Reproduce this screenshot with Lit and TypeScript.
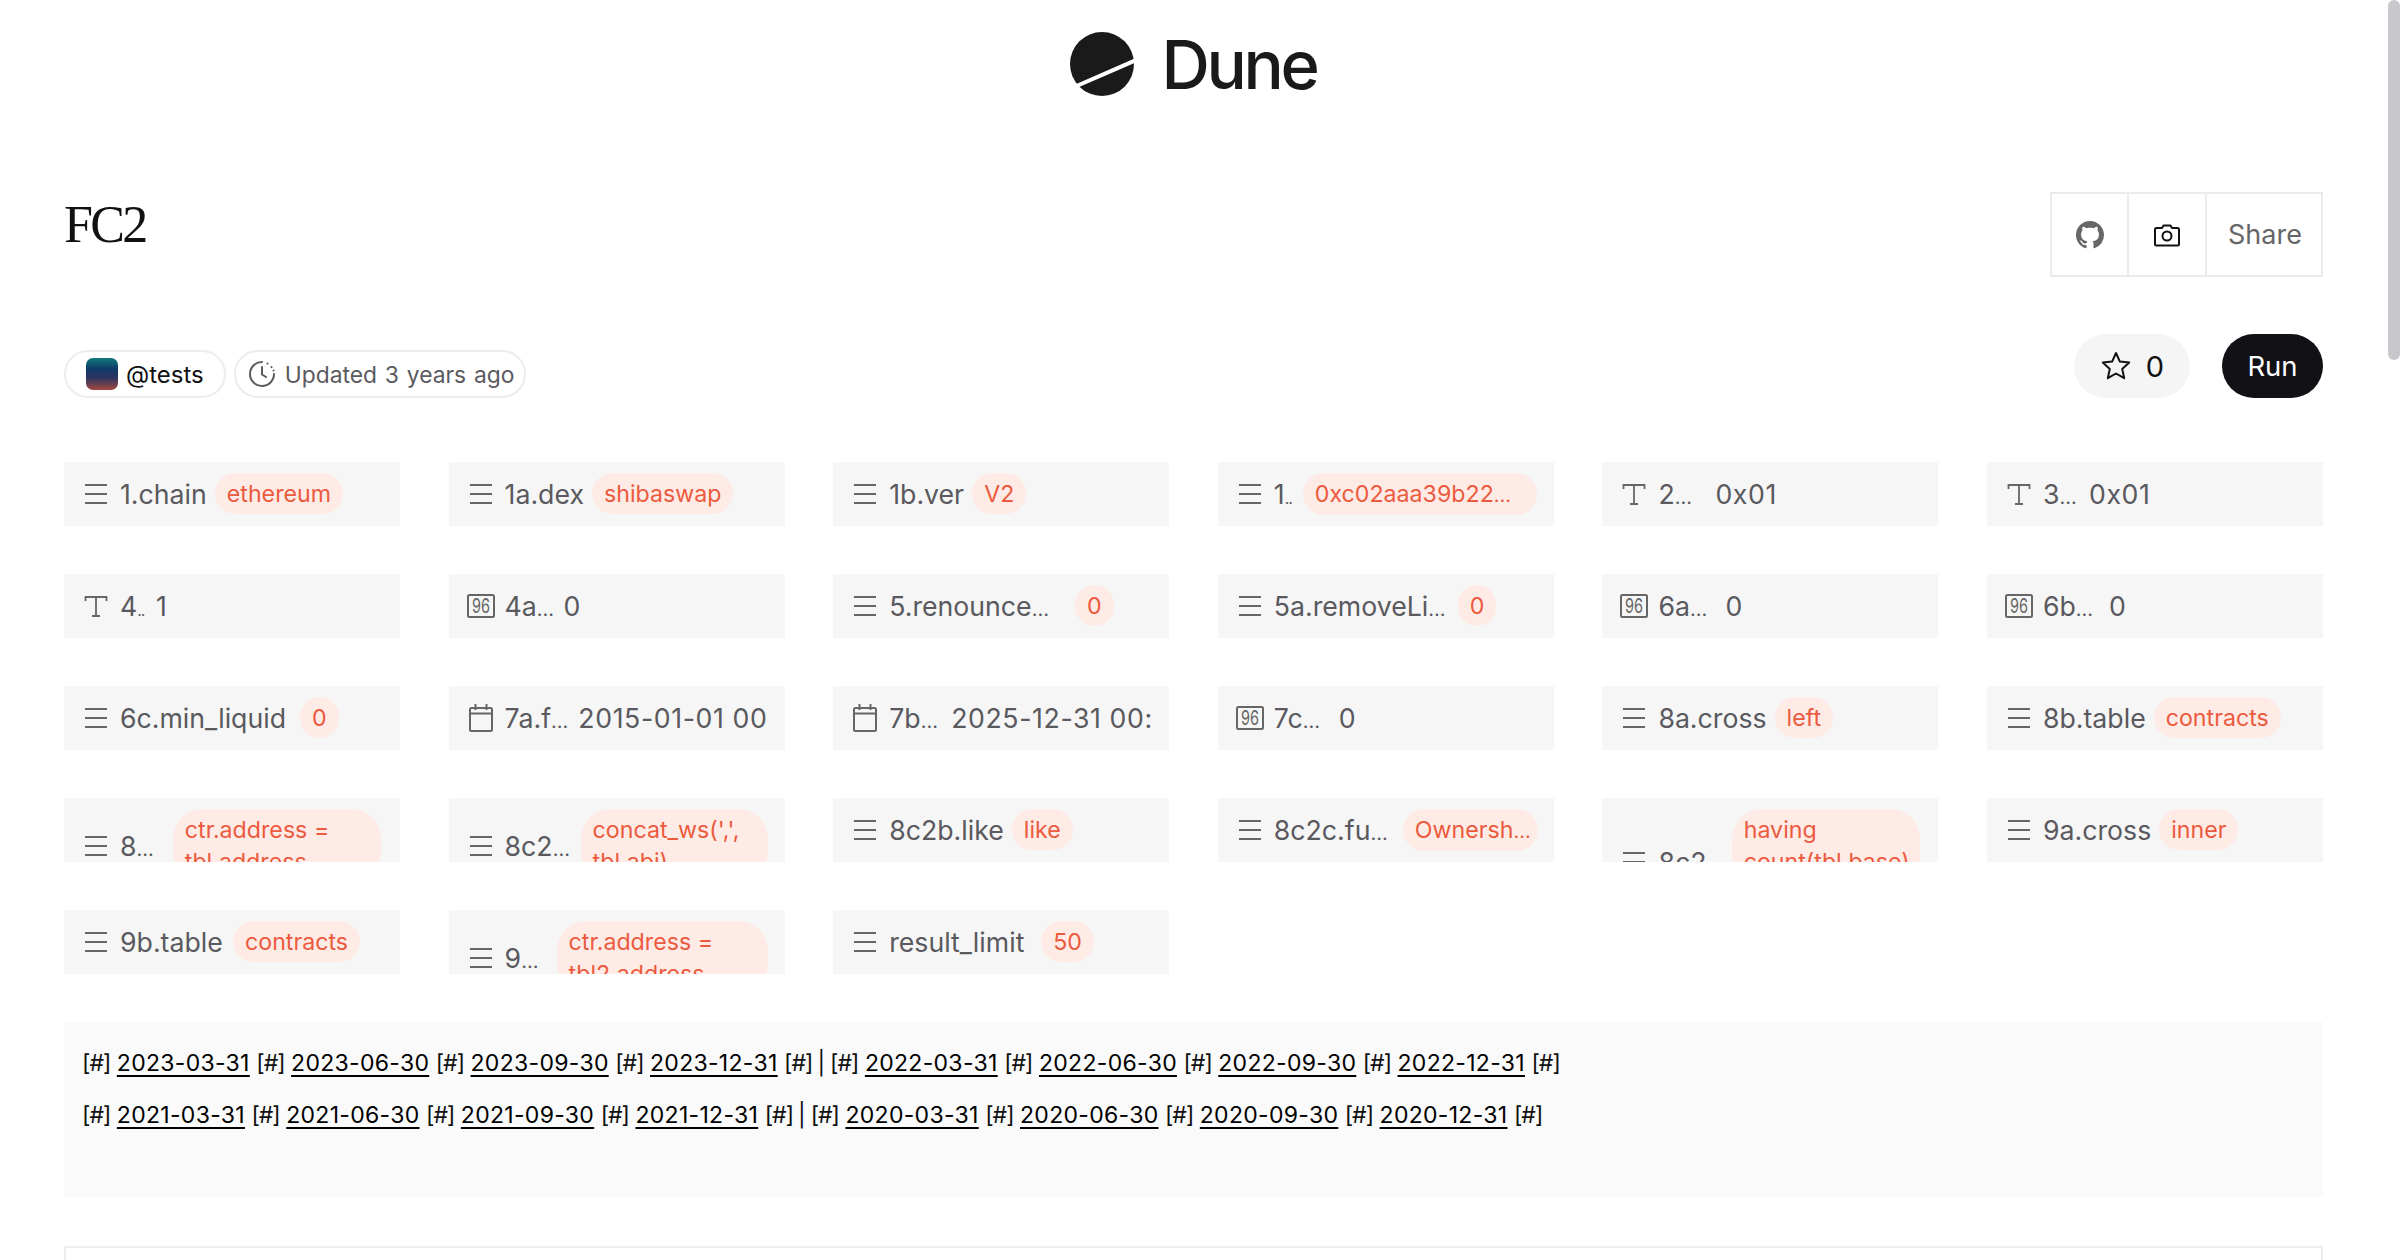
import { LitElement, html, css } from "lit";
import { customElement } from "lit/decorators.js";

type P = { i: string; l: string; w?: number; v: string; t?: boolean; g?: number; tw?: number };

const params: P[] = [
  { i: "m", l: "1.chain", v: "ethereum", t: true },
  { i: "m", l: "1a.dex", v: "shibaswap", t: true },
  { i: "m", l: "1b.ver", v: "V2", t: true },
  { i: "m", l: "1..", w: 22, v: "0xc02aaa39b22…", t: true, g: 7, tw: 234 },
  { i: "s", l: "2…", w: 37, v: "0x01", g: 20 },
  { i: "s", l: "3…", w: 35, v: "0x01", g: 11 },
  { i: "s", l: "4..", w: 30, v: "1", g: 6 },
  { i: "n", l: "4a…", w: 50, v: "0", g: 9 },
  { i: "m", l: "5.renounce…", w: 158, v: "0", t: true, g: 26 },
  { i: "m", l: "5a.removeLi…", w: 172, v: "0", t: true, g: 12 },
  { i: "n", l: "6a…", w: 55, v: "0", g: 12 },
  { i: "n", l: "6b…", w: 55, v: "0", g: 11 },
  { i: "m", l: "6c.min_liquid", w: 172, v: "0", t: true },
  { i: "c", l: "7a.f…", w: 60, v: "2015-01-01 00", g: 10 },
  { i: "c", l: "7b…", w: 50, v: "2025-12-31 00:", g: 12 },
  { i: "n", l: "7c…", w: 51, v: "0", g: 14 },
  { i: "m", l: "8a.cross", v: "left", t: true },
  { i: "m", l: "8b.table", v: "contracts", t: true },
  { i: "m", l: "8…", w: 33, v: "ctr.address = tbl.address", t: true, g: 19, tw: 208 },
  { i: "m", l: "8c2…", w: 68, v: "concat_ws(',', tbl.abi)", t: true, g: 8, tw: 187 },
  { i: "m", l: "8c2b.like", v: "like", t: true },
  { i: "m", l: "8c2c.fu…", w: 114, v: "Ownersh…", t: true, g: 15, tw: 135 },
  { i: "m", l: "8c2…", w: 50, v: "having count(tbl.base) > 0", t: true, g: 8, tw: 188 },
  { i: "m", l: "9a.cross", v: "inner", t: true },
  { i: "m", l: "9b.table", w: 105, v: "contracts", t: true },
  { i: "m", l: "9…", w: 35, v: "ctr.address = tbl2.address", t: true, g: 17, tw: 211 },
  { i: "m", l: "result_limit", w: 144, v: "50", t: true },
];

const line1 = ["2023-03-31", "2023-06-30", "2023-09-30", "2023-12-31", "|", "2022-03-31", "2022-06-30", "2022-09-30", "2022-12-31"];
const line2 = ["2021-03-31", "2021-06-30", "2021-09-30", "2021-12-31", "|", "2020-03-31", "2020-06-30", "2020-09-30", "2020-12-31"];

const icons: Record<string, unknown> = {
  m: html`<svg class="ic" viewBox="0 0 24 24" fill="none" stroke="currentColor" stroke-width="2"><path d="M1 3h22M1 12h22M1 21h22" /></svg>`,
  s: html`<svg class="ic" viewBox="0 0 24 24" fill="none" stroke="currentColor" stroke-width="1.800"><path d="M1.500 7V3h21v4M12 3v19M8 22h8" /></svg>`,
  n: html`<svg class="ic icn" viewBox="0 0 28 24"><rect x="1" y="1" width="26" height="22" rx="1.500" fill="none" stroke="currentColor" stroke-width="2" /><text class="nt" x="14" y="19" text-anchor="middle" textLength="18" lengthAdjust="spacingAndGlyphs">96</text></svg>`,
  c: html`<svg class="ic icc" viewBox="0 0 24 28" fill="none" stroke="currentColor" stroke-width="2"><rect x="1" y="4" width="22" height="23" rx="1.500" /><path d="M1 9.500h22M6.500 0v6M17.500 0v6" /></svg>`,
};

@customElement("app-root")
export class AppRoot extends LitElement {
  static styles = css`
    :host {
      display: block;
      position: relative;
      height: 100vh;
      overflow: hidden;
      background: #fff;
      font-family: Inter, "Liberation Sans", sans-serif;
      color: #111;
    }
    * { box-sizing: border-box; }
    .thumb { position: absolute; top: 0; right: 0; width: 12px; height: 360px; background: #c8c8cc; border-radius: 6px; }
    .page { padding: 0 77px 0 64px; }
    .brand { height: 128px; display: flex; align-items: center; justify-content: center; gap: 27px; }
    .brand svg { width: 64px; height: 64px; }
    .word { font-size: 67px; font-weight: 500; letter-spacing: -3.300px; color: #1a1a1a; line-height: 1; }
    .title-row { margin-top: 64px; height: 85px; display: flex; justify-content: space-between; }
    h1 { margin: 0; font: 400 52px/1 "Liberation Serif", serif; color: #111; padding-top: 7px; letter-spacing: -2.700px; }
    .group { display: flex; border: 2px solid #ebebeb; height: 85px; }
    .group > div { display: flex; align-items: center; justify-content: center; }
    .g1 { width: 77px; border-right: 2px solid #ebebeb; color: #666; }
    .g2 { width: 78px; border-right: 2px solid #ebebeb; color: #111; }
    .g3 { flex: 1; width: 114px; padding-left: 2px; font-size: 27px; color: #666; }
    .meta { margin-top: 57px; height: 64px; display: flex; justify-content: space-between; align-items: flex-end; }
    .pills { display: flex; gap: 8px; }
    .pill { height: 48px; border: 2px solid #ededed; border-radius: 24px; display: flex; align-items: center; font-size: 22.800px; }
    .p1 { padding: 0 20px; gap: 8px; font-size: 24px; color: #111; }
    .ava { width: 32px; height: 32px; border-radius: 7px; background: linear-gradient(180deg, #12787c 0%, #0f3a68 35%, #2d3560 62%, #a4493f 100%); }
    .p2 { padding: 0 10px 0 12px; gap: 9px; color: #5a5a60; word-spacing: 1.500px; }
    .actions { display: flex; gap: 32px; height: 64px; }
    .star { width: 116px; border-radius: 32px; background: #f5f5f5; display: flex; align-items: center; justify-content: center; gap: 14px; font-size: 29px; }
    .run { width: 101px; border-radius: 32px; background: #111116; color: #fff; display: flex; align-items: center; justify-content: center; font-size: 27.500px; }
    .grid { margin-top: 64px; display: grid; grid-template-columns: repeat(6, 336px); justify-content: space-between; row-gap: 48px; grid-auto-rows: 64px; }
    .cell { background: #f6f6f6; height: 64px; overflow: hidden; display: flex; padding: 11px 17px 0 20px; align-items: flex-start; }
    .inner { display: flex; align-items: center; min-height: 41px; width: 100%; color: #59595e; font-size: 26.700px; white-space: nowrap; }
    .ic { width: 24px; height: 24px; flex: none; margin-right: 12px; color: #666; }
    .icn { width: 28px; margin-left: -2px; margin-right: 10px; }
    .icc { height: 28px; margin-right: 12px; }
    .nt { font: 400 20px Inter, sans-serif; fill: currentColor; }
    .lab { flex: none; }
    .el { font-size: 20px; }
    .el2 { font-size: 16px; letter-spacing: -1px; }
    .val { flex: none; letter-spacing: 0.600px; }
    .tag { background: #feebe6; color: #ec5a3e; border-radius: 30px; padding: 4.500px 12px; font-size: 23.200px; line-height: 32px; white-space: normal; margin-left: 8px; flex: 0 1 auto; min-width: 0; }
    .tag.nw { white-space: nowrap; }
    .md { margin-top: 48px; height: 175px; background: #fafafa; padding: 15px 18px; font-size: 23px; line-height: 52px; color: #111; }
    .md div { white-space: pre; }
    .h { letter-spacing: -1px; }
    .bar { margin-right: -1.500px; margin-left: -1.500px; }
    .md a { color: #000; letter-spacing: 0.300px; text-decoration: underline; text-decoration-thickness: 2px; text-underline-offset: 4px; }
    .card { margin-top: 49px; height: 300px; border: 2px solid #eee; }
  `;

  private lab(s: string) {
    if (s.endsWith("…")) return html`${s.slice(0, -1)}<span class="el">…</span>`;
    if (s.endsWith("..")) return html`${s.slice(0, -2)}<span class="el2">..</span>`;
    return s;
  }

  private cell(p: P) {
    const st = p.w ? `min-width:${p.w}px` : "";
    let ts = p.g ? `margin-left:${p.g}px;` : "";
    if (p.tw) ts += `width:${p.tw}px;flex:none;`;
    return html`<div class="cell"><div class="inner">
      ${icons[p.i]}
      <span class="lab" style=${st}>${this.lab(p.l)}</span>
      ${p.t
        ? html`<span class="tag ${p.v.length < 16 ? "nw" : ""}" style=${ts}>${this.lab(p.v)}</span>`
        : html`<span class="val" style=${`margin-left:${p.g ?? 10}px`}>${p.v}</span>`}
    </div></div>`;
  }

  private mdLine(items: string[]) {
    return html`<div><span class="h">[#]</span> ${items.map((d) =>
      d === "|" ? html`<span class="bar">|</span> <span class="h">[#]</span> ` : html`<a>${d}</a> <span class="h">[#]</span> `
    )}</div>`;
  }

  render() {
    return html`<div class="page">
      <div class="brand">
        <svg viewBox="0 0 64 64"><circle cx="32" cy="32" r="32" fill="#1a1a1a" /><path d="M72 25.500 2 56" stroke="#fff" stroke-width="4" /></svg>
        <span class="word">Dune</span>
      </div>
      <div class="title-row">
        <h1>FC2</h1>
        <div class="group">
          <div class="g1">
            <svg width="28" height="28" viewBox="0 0 16 16" fill="currentColor"><path d="M8 0C3.580 0 0 3.580 0 8c0 3.540 2.290 6.530 5.470 7.590.400.070.550-.170.550-.380 0-.190-.010-.820-.010-1.490-2.010.370-2.530-.490-2.690-.940-.090-.230-.480-.940-.820-1.130-.280-.150-.680-.520-.010-.530.630-.010 1.080.580 1.230.820.720 1.210 1.870.870 2.330.660.070-.520.280-.870.510-1.070-1.780-.200-3.640-.890-3.640-3.950 0-.870.310-1.590.820-2.150-.080-.200-.360-1.020.080-2.120 0 0 .670-.210 2.200.820.640-.180 1.320-.270 2-.270s1.360.090 2 .270c1.530-1.040 2.200-.820 2.200-.820.440 1.100.160 1.920.080 2.120.510.560.820 1.270.820 2.150 0 3.070-1.870 3.750-3.650 3.950.290.250.540.730.540 1.480 0 1.070-.010 1.930-.010 2.200 0 .210.150.460.550.380A8.010 8.010 0 0 0 16 8c0-4.420-3.580-8-8-8z" /></svg>
          </div>
          <div class="g2">
            <svg width="28" height="28" viewBox="0 0 28 28" fill="none" stroke="currentColor" stroke-width="2" stroke-linejoin="round"><path d="M2 8.500a1.500 1.500 0 0 1 1.500-1.500H9l1.500-2.500h7L19 7h5.500A1.500 1.500 0 0 1 26 8.500V23a1.500 1.500 0 0 1-1.500 1.500h-21A1.500 1.500 0 0 1 2 23z" /><circle cx="14" cy="15" r="4.500" /></svg>
          </div>
          <div class="g3">Share</div>
        </div>
      </div>
      <div class="meta">
        <div class="pills">
          <div class="pill p1"><span class="ava"></span>@tests</div>
          <div class="pill p2">
            <svg width="28" height="28" viewBox="0 0 28 28" fill="none" stroke="#5a5a60" stroke-width="2" stroke-linecap="round"><path d="M14 2a12 12 0 1 0 12 12" /><path d="M14 7v7.500l4 2.500" /><path d="M19.500 3.500l.1.1M23.500 7l.1.1M25.500 10.500v.1" /></svg>
            Updated 3 years ago
          </div>
        </div>
        <div class="actions">
          <div class="star">
            <svg width="32" height="32" viewBox="0 0 32 32" fill="none" stroke="#111" stroke-width="2" stroke-linejoin="round"><path d="M16 3l3.900 8.600 9.300 1-7 6.300 2 9.300L16 23.500l-8.200 4.700 2-9.300-7-6.300 9.300-1z" /></svg>
            0
          </div>
          <div class="run">Run</div>
        </div>
      </div>
      <div class="grid">${params.map((p) => this.cell(p))}</div>
      <div class="md">${this.mdLine(line1)}${this.mdLine(line2)}</div>
      <div class="card"></div>
    </div>
    <div class="thumb"></div>`;
  }
}
